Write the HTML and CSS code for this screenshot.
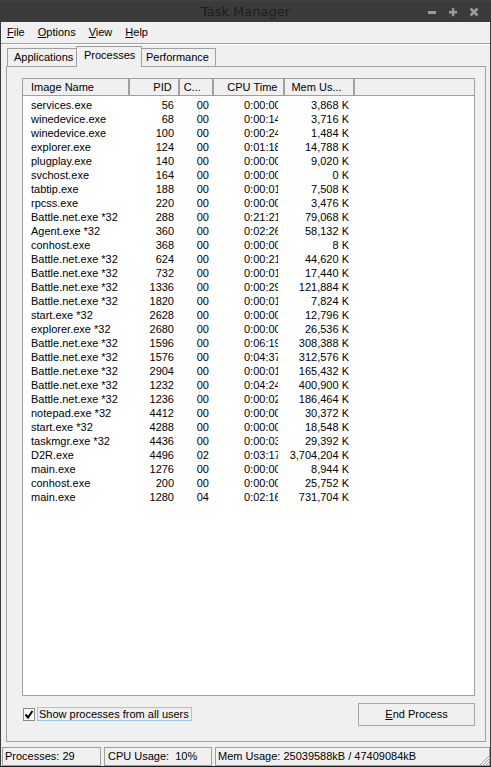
FILE: index.html
```html
<!DOCTYPE html>
<html>
<head>
<meta charset="utf-8">
<title>Task Manager</title>
<link rel="stylesheet" href="styles.css">
</head>
<body>
<div class="window">
  <div class="titlebar">
    <div></div>
    <div class="title">Task Manager</div>
    <div class="wbtns">
      <svg class="wbtn" width="10" height="10" viewBox="0 0 10 10"><rect x="1" y="4" width="8" height="3" fill="#9a9a9a"/></svg>
      <svg class="wbtn" width="10" height="10" viewBox="0 0 10 10"><rect x="1" y="4" width="8" height="2.5" fill="#9a9a9a"/><rect x="3.8" y="1.2" width="2.5" height="8" fill="#9a9a9a"/></svg>
      <svg class="wbtn" width="10" height="10" viewBox="0 0 10 10"><path d="M1.5 1.5 L8.5 8.5 M8.5 1.5 L1.5 8.5" stroke="#9a9a9a" stroke-width="2.6"/></svg>
    </div>
  </div>
  <div class="menubar">
    <span class="mi"><u>F</u>ile</span>
    <span class="mi"><u>O</u>ptions</span>
    <span class="mi"><u>V</u>iew</span>
    <span class="mi"><u>H</u>elp</span>
  </div>
  <div class="tabs">
    <div class="tab t-app">Applications</div>
    <div class="tab t-proc sel">Processes</div>
    <div class="tab t-perf">Performance</div>
  </div>
  <div class="panel">
    <div class="list">
      <div class="hdr">
        <div class="hc c1">Image Name</div>
        <div class="hc c2">PID</div>
        <div class="hc c3">C...</div>
        <div class="hc c4">CPU Time</div>
        <div class="hc c5">Mem Us...</div>
        <div class="hc c6"></div>
      </div>
      <div class="rows" id="rows"></div>
    </div>
    <div class="bottom">
      <div class="chkwrap">
        <svg class="chk" width="12" height="13" viewBox="0 0 12 13"><rect x="0.5" y="0.5" width="11" height="12" fill="#fff" stroke="#8a8a8a"/><path d="M2.5 6.5 L5 9.5 L9.5 3" fill="none" stroke="#000" stroke-width="2"/></svg>
        <span class="chklabel">Show processes from all users</span>
      </div>
      <div class="btn"><u>E</u>nd Process</div>
    </div>
  </div>
  <div class="status">
    <div class="sp s1">Processes: 29</div>
    <div class="sp s2">CPU Usage:&nbsp;&nbsp;10%</div>
    <div class="sp s3">Mem Usage: 25039588kB / 47409084kB</div>
  </div>
  <svg class="grip" width="12" height="12" viewBox="0 0 12 12"><path d="M11 2 L2 11 M11 5 L5 11 M11 8 L8 11" stroke="#a8a8a8" stroke-width="1"/></svg>
</div>
<script>
var data = [
["services.exe","56","00","0:00:00","3,868 K"],
["winedevice.exe","68","00","0:00:14","3,716 K"],
["winedevice.exe","100","00","0:00:24","1,484 K"],
["explorer.exe","124","00","0:01:18","14,788 K"],
["plugplay.exe","140","00","0:00:00","9,020 K"],
["svchost.exe","164","00","0:00:00","0 K"],
["tabtip.exe","188","00","0:00:01","7,508 K"],
["rpcss.exe","220","00","0:00:00","3,476 K"],
["Battle.net.exe *32","288","00","0:21:21","79,068 K"],
["Agent.exe *32","360","00","0:02:26","58,132 K"],
["conhost.exe","368","00","0:00:00","8 K"],
["Battle.net.exe *32","624","00","0:00:21","44,620 K"],
["Battle.net.exe *32","732","00","0:00:01","17,440 K"],
["Battle.net.exe *32","1336","00","0:00:29","121,884 K"],
["Battle.net.exe *32","1820","00","0:00:01","7,824 K"],
["start.exe *32","2628","00","0:00:00","12,796 K"],
["explorer.exe *32","2680","00","0:00:00","26,536 K"],
["Battle.net.exe *32","1596","00","0:06:19","308,388 K"],
["Battle.net.exe *32","1576","00","0:04:37","312,576 K"],
["Battle.net.exe *32","2904","00","0:00:01","165,432 K"],
["Battle.net.exe *32","1232","00","0:04:24","400,900 K"],
["Battle.net.exe *32","1236","00","0:00:02","186,464 K"],
["notepad.exe *32","4412","00","0:00:00","30,372 K"],
["start.exe *32","4288","00","0:00:00","18,548 K"],
["taskmgr.exe *32","4436","00","0:00:03","29,392 K"],
["D2R.exe","4496","02","0:03:17","3,704,204 K"],
["main.exe","1276","00","0:00:00","8,944 K"],
["conhost.exe","200","00","0:00:00","25,752 K"],
["main.exe","1280","04","0:02:16","731,704 K"]
];
var html = "";
for (var i = 0; i < data.length; i++) {
  var r = data[i];
  html += '<div class="row"><div class="dc c1">' + r[0] + '</div><div class="dc c2">' + r[1] +
    '</div><div class="dc c3">' + r[2] + '</div><div class="dc c4"><div class="clip">' + r[3] +
    '</div></div><div class="dc c5">' + r[4] + '</div></div>';
}
document.getElementById("rows").innerHTML = html;
</script>
</body>
</html>
```
FILE: styles.css
```css
* { box-sizing: border-box; }
html, body { margin: 0; padding: 0; }
body {
  width: 491px;
  height: 767px;
  background: #f0f0f0;
  font-family: "Liberation Sans", Arial, sans-serif;
  font-size: 11px;
  color: #000;
  overflow: hidden;
}
.window {
  position: relative;
  width: 491px;
  height: 767px;
  display: flex;
  flex-direction: column;
  border-left: 1px solid #3a3a3a;
  border-right: 1px solid #3a3a3a;
  border-bottom: 1px solid #1a1a1a;
}
.titlebar {
  height: 22px;
  flex: none;
  background: linear-gradient(#444 0, #3b3b3b 2px, #3a3a3a 100%);
  display: grid;
  grid-template-columns: 1fr auto 1fr;
  align-items: center;
  margin: 0 -1px;
}
.title {
  font-family: "DejaVu Sans", sans-serif;
  font-size: 13px;
  color: #1d1d1d;
  padding-top: 1px;
}
.wbtns {
  display: flex;
  justify-content: flex-end;
  gap: 11px;
  padding-right: 12px;
  padding-top: 1px;
}
.wbtn { display: block; }
.menubar {
  height: 22px;
  flex: none;
  display: flex;
  align-items: center;
  gap: 13px;
  padding-left: 6px;
  padding-bottom: 1px;
  border-bottom: 1px solid #a0a0a0;
  box-shadow: 0 1px 0 #ffffff;
}
.mi u, .btn u { text-decoration: underline; text-underline-offset: 1px; }
.tabs {
  flex: none;
  height: 20px;
  margin-top: 2px;
  display: flex;
  align-items: flex-end;
  padding-left: 6px;
}
.tab {
  height: 18px;
  border: 1px solid #a0a0a0;
  border-bottom: none;
  line-height: 16px;
  white-space: nowrap;
  background: #f0f0f0;
}
.t-app { width: 70px; padding-left: 6px; }
.t-proc { width: 66px; padding-left: 7px; margin-left: -1px; }
.t-perf { width: 75px; padding-left: 4px; margin-left: -1px; }
.tab.sel {
  height: 21px;
  margin-bottom: -1px;
  position: relative;
  z-index: 2;
  line-height: 17px;
}
.panel {
  flex: 1;
  margin: 0 4px 0 5px;
  border: 1px solid #a0a0a0;
  padding: 11px 10px 15px 15px;
  display: flex;
  flex-direction: column;
}
.list {
  flex: 1;
  border: 1px solid #a0a0a0;
  background: #fff;
  display: flex;
  flex-direction: column;
  overflow: hidden;
}
.hdr {
  display: flex;
  height: 17px;
  flex: none;
  background: #f0f0f0;
  border-bottom: 1px solid #a0a0a0;
}
.hc {
  border-right: 2px solid #a0a0a0;
  line-height: 16px;
  white-space: nowrap;
  overflow: hidden;
}
.c1 { width: 107px; }
.c2 { width: 50px; }
.c3 { width: 34px; }
.c4 { width: 72px; }
.c5 { width: 70px; }
.hc.c6 { width: 119px; border-right: none; }
.hc.c1 { padding-left: 8px; }
.hc.c2 { text-align: right; padding-right: 6px; }
.hc.c3 { padding-left: 4px; }
.hc.c4 { text-align: right; padding-right: 6px; }
.hc.c5 { padding-left: 6px; }
.rows { padding-top: 2px; }
.row {
  display: flex;
  height: 14px;
  line-height: 14px;
  white-space: nowrap;
}
.dc { overflow: hidden; }
.dc.c1 { padding-left: 8px; }
.dc.c2 { text-align: right; padding-right: 6px; }
.dc.c3 { text-align: right; padding-right: 5px; }
.dc.c4 { padding-left: 30px; }
.clip { width: 34px; overflow: hidden; }
.dc.c5 { text-align: right; padding-right: 7px; }
.bottom {
  flex: none;
  height: 30px;
  padding-top: 7px;
  display: flex;
  align-items: center;
  justify-content: space-between;
}
.chkwrap {
  display: flex;
  align-items: center;
  gap: 2px;
  margin-left: 1px;
  margin-top: -1px;
}
.chk { display: block; }
.chklabel {
  border: 1px solid #99c9f0;
  padding: 0 2px 0 1px;
  line-height: 12px;
  height: 14px;
}
.btn {
  width: 117px;
  height: 23px;
  border: 1px solid #a8a8a8;
  background: #f0f0f0;
  text-align: center;
  line-height: 21px;
}
.status {
  flex: none;
  height: 19px;
  margin-top: 5px;
  display: flex;
  gap: 3px;
  padding-left: 1px;
}
.sp {
  border: 1px solid #a0a0a0;
  height: 19px;
  line-height: 17px;
  padding-left: 2px;
  white-space: nowrap;
}
.s1 { width: 99px; }
.s2 { width: 108px; padding-left: 3px; }
.s3 { width: 275px; padding-left: 2px; }
.grip {
  position: absolute;
  right: 0;
  bottom: 0;
}
```
